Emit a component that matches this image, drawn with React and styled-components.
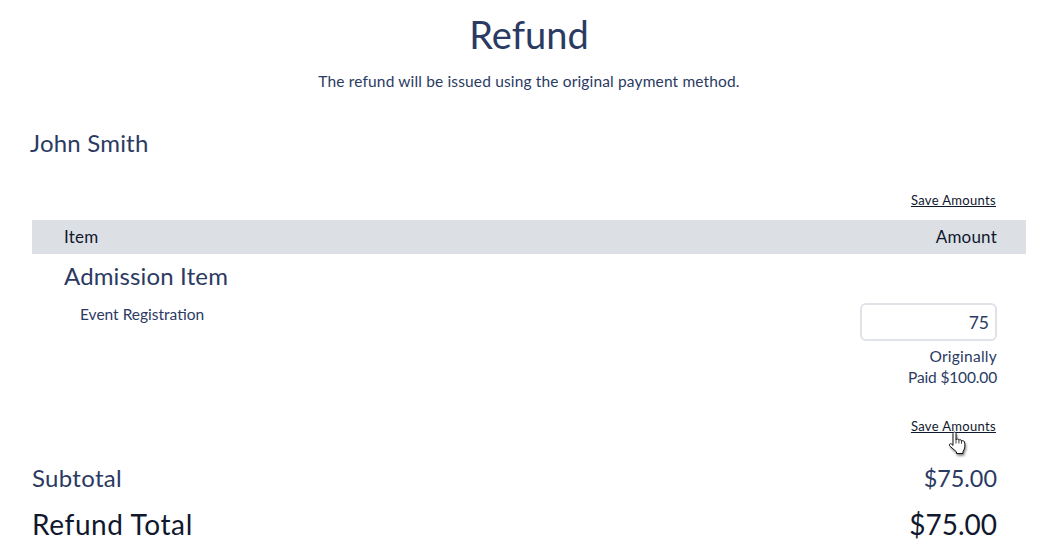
import React from "react";
import styled, { createGlobalStyle } from "styled-components";

const Global = createGlobalStyle`
  html, body { margin: 0; padding: 0; background: #fff; }
  body { font-family: "Lato", "Noto Sans", "Liberation Sans", sans-serif; color: #2b3a63; overflow: hidden; }
`;
const Page = styled.div`
  width: 1047px; height: 552px; box-sizing: border-box; padding: 0 21px 0 32px; overflow: hidden;
`;
const Title = styled.h1`
  margin: 0; padding-top: 10px; height: 49px; font-size: 38px; line-height: 49px; font-weight: 400; text-align: center;
`;
const Subtitle = styled.p`
  margin: 0; padding-top: 12px; height: 20px; font-size: 15.5px; line-height: 20px; letter-spacing: .15px; text-align: center;
`;
const Name = styled.h2`
  margin: 0; padding-top: 36px; height: 32px; margin-left: -2px; font-size: 24px; line-height: 32px; font-weight: 400; letter-spacing: .2px;
`;
const SaveRow = styled.div`
  display: flex; justify-content: flex-end; padding-right: 30px; position: relative;
  margin-top: ${p => p.$top}px; height: 18px;
`;
const SaveLink = styled.a`
  font-size: 13px; line-height: 18px; letter-spacing: .33px; color: #10172e; text-decoration: underline; cursor: pointer;
`;
const HeadBar = styled.div`
  display: flex; justify-content: space-between; align-items: center; box-sizing: border-box; height: 34px; margin-top: 11px;
  padding: 0 29px 2px 32px; background: #dce0e5; font-size: 17px; letter-spacing: .2px; color: #10172e;
`;
const Group = styled.h3`
  margin: 0; padding: 6px 0 0 32px; height: 31px; font-size: 24px; line-height: 31px; font-weight: 400; letter-spacing: .15px;
`;
const ItemRow = styled.div`
  display: flex; justify-content: space-between; padding: 12px 29px 0 48px;
`;
const ItemName = styled.div`
  margin-top: 1px; font-size: 15.5px; line-height: 20px;
`;
const AmountCol = styled.div`
  display: flex; flex-direction: column; align-items: flex-end; width: 137px;
`;
const AmountInput = styled.input`
  box-sizing: border-box; width: 137px; height: 38px; border: 2px solid #dfe3e8; border-radius: 6px; background: #fff;
  text-align: right; padding: 0 6px; font: 400 17.5px "Lato", sans-serif; color: #2b3a63; outline: none;
`;
const Note = styled.div`
  margin-top: 5px; font-size: 15.5px; line-height: 21px; text-align: right;
`;
const NoteLine = styled.div`
  letter-spacing: ${p => p.$spacing}px;
`;
const TotalRow = styled.div`
  display: flex; justify-content: space-between; padding-right: 29px;
  margin-top: ${p => p.$top}px; font-size: ${p => p.$size}px; line-height: 34px;
  color: ${p => p.$dark ? "#10172e" : "#2b3a63"};
`;
const TotalLabel = styled.span`
  letter-spacing: ${p => p.$spacing}px;
`;
const TotalAmount = styled.span`
  font-size: ${p => p.$size}px;
`;
const Cursor = styled.svg`
  position: absolute; left: 916px; top: 14px; width: 20px; height: 26px; pointer-events: none;
  filter: drop-shadow(1px 2px 1px rgba(0,0,0,.45));
`;

export default function App() {
  return (
    <Page>
      <Global />
      <Title>Refund</Title>
      <Subtitle>The refund will be issued using the original payment method.</Subtitle>
      <Name>John Smith</Name>
      <SaveRow $top={32}><SaveLink>Save Amounts</SaveLink></SaveRow>
      <HeadBar><span>Item</span><span>Amount</span></HeadBar>
      <Group>Admission Item</Group>
      <ItemRow>
        <ItemName>Event Registration</ItemName>
        <AmountCol>
          <AmountInput defaultValue="75" />
          <Note>
            <NoteLine $spacing={.25}>Originally</NoteLine>
            <NoteLine $spacing={-.15}>Paid $100.00</NoteLine>
          </Note>
        </AmountCol>
      </ItemRow>
      <SaveRow $top={29}>
        <SaveLink>Save Amounts</SaveLink>
        <Cursor viewBox="0 0 20 26">
          <path d="M5 2.5c0-2 3-2 3 0V9l.2-.3c.5-1 2.3-.9 2.6.2l.1.4c.5-1 2.3-.8 2.5.4l.1.4c.6-.8 2.3-.5 2.8.6.7 1.6.7 4.2.3 6.3-.3 1.4-.9 2.4-1.6 3.5v2H8.5v-1.6L1.6 14.8c-1-1.2.6-2.8 2-1.7L5 14.4z" fill="#fff" stroke="#111" strokeWidth="1" strokeLinejoin="round" />
          <path d="M8 9v3.5M10.9 9.3v3.2M13.5 10v2.7" fill="none" stroke="#111" strokeWidth=".8" />
        </Cursor>
      </SaveRow>
      <TotalRow $top={26} $size={24}><TotalLabel $spacing={.3}>Subtotal</TotalLabel><TotalAmount $size={23.4}>$75.00</TotalAmount></TotalRow>
      <TotalRow $top={12} $size={28} $dark><TotalLabel $spacing={.6}>Refund Total</TotalLabel><TotalAmount $size={28}>$75.00</TotalAmount></TotalRow>
    </Page>
  );
}
